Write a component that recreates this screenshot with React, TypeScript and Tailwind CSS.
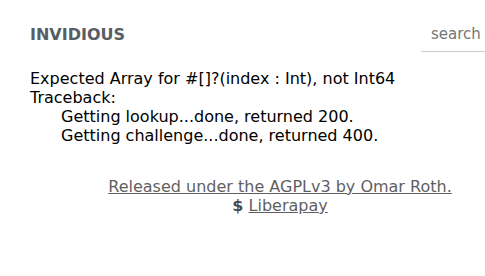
export default function App() {
  return (
    <div className="w-[485px] h-[276px] overflow-hidden bg-white font-['DejaVu_Sans',sans-serif] text-[16px] leading-[19px] text-black">
      <div className="w-[500px] ml-[30px]">
        <div className="flex items-center h-[52px] pt-[16px]">
          <span className="font-bold text-[16px] text-[#565d64]">INVIDIOUS</span>
          <div className="ml-auto w-[109px] mt-[4px] border-b border-[#ccc] pb-[7px] pt-[4px] pl-[10px] text-[15px] text-[#757575]">
            search
          </div>
        </div>

        <div className="mt-[17px]">
          <p>Expected Array for #[]?(index : Int), not Int64</p>
          <p>Traceback:</p>
          <p className="pl-[31px]">Getting lookup...done, returned 200.</p>
          <p className="pl-[31px]">Getting challenge...done, returned 400.</p>
        </div>

        <div className="mt-[32px] text-center text-[#5f5f5f]">
          <p>
            <a className="underline">Released under the AGPLv3 by Omar Roth.</a>
          </p>
          <p>
            <span className="font-bold text-[#4a4a4a]">$</span> <a className="underline">Liberapay</a>
          </p>
        </div>
      </div>
    </div>
  );
}
